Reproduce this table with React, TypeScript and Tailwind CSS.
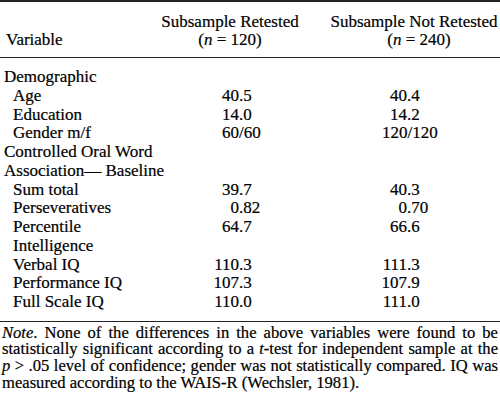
type Row = {
  label: string
  indent?: boolean
  a?: [string, string]
  b?: [string, string]
}

const rows: Row[] = [
  { label: "Demographic" },
  { label: "Age", indent: true, a: ["40", ".5"], b: ["40", ".4"] },
  { label: "Education", indent: true, a: ["14", ".0"], b: ["14", ".2"] },
  { label: "Gender m/f", indent: true, a: ["60/60", ""], b: ["120/120", ""] },
  { label: "Controlled Oral Word" },
  { label: "Association\u2014 Baseline" },
  { label: "Sum total", indent: true, a: ["39", ".7"], b: ["40", ".3"] },
  { label: "Perseveratives", indent: true, a: ["0", ".82"], b: ["0", ".70"] },
  { label: "Percentile", indent: true, a: ["64", ".7"], b: ["66", ".6"] },
  { label: "Intelligence", indent: true },
  { label: "Verbal IQ", indent: true, a: ["110", ".3"], b: ["111", ".3"] },
  { label: "Performance IQ", indent: true, a: ["107", ".3"], b: ["107", ".9"] },
  { label: "Full Scale IQ", indent: true, a: ["110", ".0"], b: ["111", ".0"] },
]

function Value({ v, col }: { v?: [string, string]; col: 1 | 2 }) {
  if (!v) return <div />
  if (v[1] === "") {
    return <div className="pl-[72px]">{v[0]}</div>
  }
  return (
    <div className="flex">
      <span className={col === 1 ? "w-[89px] text-right" : "w-[97px] text-right"}>{v[0]}</span>
      <span>{v[1]}</span>
    </div>
  )
}

export default function App() {
  return (
    <div className="w-[500px] h-[403px] bg-white text-black font-['Liberation_Serif',serif] text-[17px] [-webkit-text-stroke:0.2px_black] overflow-hidden">
      <div className="h-[2px] bg-[#222]" />

      {/* header */}
      <div className="grid grid-cols-[150px_160px_190px] pt-[11px] pb-[8px] leading-[18px]">
        <div className="flex items-end pl-[6px]">Variable</div>
        <div className="text-center">
          <div>Subsample Retested</div>
          <div>
            (<i>n</i> = 120)
          </div>
        </div>
        <div className="text-center pl-[18px]">
          <div>Subsample Not Retested</div>
          <div className="pl-[10px]">
            (<i>n</i> = 240)
          </div>
        </div>
      </div>
      <div className="h-px bg-[#222]" />

      {/* body */}
      <div className="pt-[10px] pb-[9px] leading-[18.75px]">
        {rows.map((r) => (
          <div key={r.label} className="grid grid-cols-[150px_160px_190px]">
            <div className={r.indent ? "pl-[13px] whitespace-nowrap" : "pl-[4px] whitespace-nowrap"}>{r.label}</div>
            <Value v={r.a} col={1} />
            <Value v={r.b} col={2} />
          </div>
        ))}
      </div>
      <div className="h-px bg-[#222]" />

      {/* note */}
      <div className="pt-[3px] px-[2px] text-[16.6px] leading-[16.7px]">
        <div className="[text-align-last:justify]">
          <i>Note</i>. None of the differences in the above variables were found to be
        </div>
        <div className="[text-align-last:justify]">
          statistically significant according to a <i>t</i>-test for independent sample at the
        </div>
        <div className="[text-align-last:justify]">
          <i>p</i> &gt; .05 level of confidence; gender was not statistically compared. IQ was
        </div>
        <div>measured according to the WAIS-R (Wechsler, 1981).</div>
      </div>
    </div>
  )
}
